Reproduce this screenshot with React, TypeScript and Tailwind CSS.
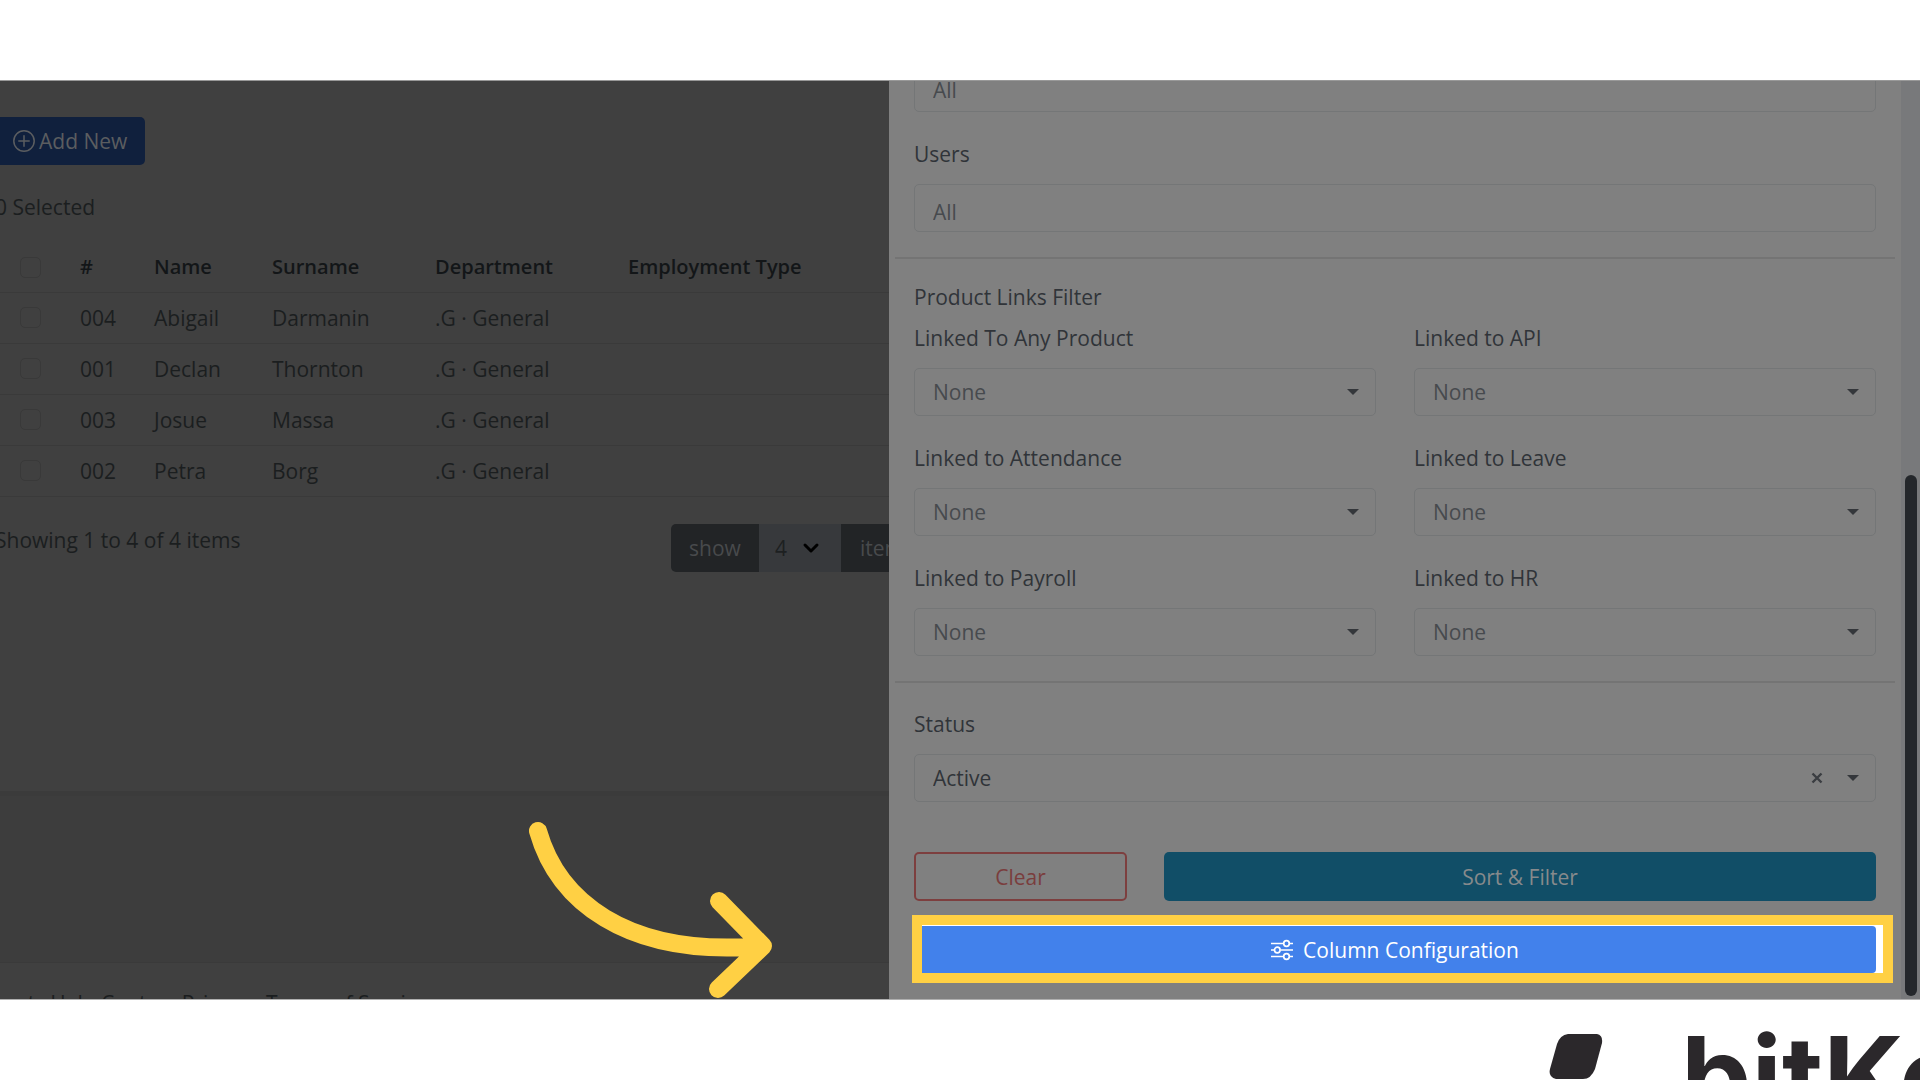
import { useState } from 'react'
import { ChevronDown } from 'lucide-react'

const EMPLOYEES = [
  { code: '004', name: 'Abigail', surname: 'Darmanin', department: '.G · General' },
  { code: '001', name: 'Declan', surname: 'Thornton', department: '.G · General' },
  { code: '003', name: 'Josue', surname: 'Massa', department: '.G · General' },
  { code: '002', name: 'Petra', surname: 'Borg', department: '.G · General' },
]

const PRODUCT_LINKS = [
  { id: 'any', label: 'Linked To Any Product' },
  { id: 'api', label: 'Linked to API' },
  { id: 'attendance', label: 'Linked to Attendance' },
  { id: 'leave', label: 'Linked to Leave' },
  { id: 'payroll', label: 'Linked to Payroll' },
  { id: 'hr', label: 'Linked to HR' },
]

const checkboxClass = 'block size-[21px] appearance-none rounded-[5px] border border-[#393939]'
const fieldClass = 'h-12 w-full appearance-none rounded-[5px] border border-[#747677] bg-transparent px-[18px] outline-none'
const labelClass = 'block text-[#303439]'

function Caret() {
  return (
    <svg className="pointer-events-none absolute top-[21px] right-[17px] h-[6px] w-3" viewBox="0 0 12 6" aria-hidden="true">
      <path d="M0 0h12L6 6z" fill="#34373b" />
    </svg>
  )
}

function LinkSelect({ id, label }: { id: string; label: string }) {
  return (
    <div>
      <label htmlFor={id} className={labelClass}>{label}</label>
      <div className="relative mt-4">
        <select id={id} className={`${fieldClass} text-[#474a4e]`}>
          <option>None</option>
        </select>
        <Caret />
      </div>
    </div>
  )
}

function EmployeeList() {
  return (
    <main className="flex min-w-0 flex-col overflow-hidden bg-[#404040] text-[#1b1e1f]">
      <div className="h-[710px] shrink-0">
        <button className="mt-9 -ml-2 flex h-12 w-[153px] items-center rounded-[5px] bg-[#10203d] pl-[21px] text-[#5b5d60]">
          <svg className="mr-1 size-[22px]" viewBox="0 0 22 22" fill="none" stroke="currentColor" strokeWidth="1.5" aria-hidden="true">
            <circle cx="11" cy="11" r="10.2" />
            <path d="M11 5.8v10.4M5.8 11h10.4" strokeLinecap="round" />
          </svg>
          Add New
        </button>
        <p className="mt-7 -ml-[5px] leading-7">0 Selected</p>

        <table className="mt-[22px] w-full min-w-[900px] table-fixed border-collapse text-left">
          <colgroup>
            <col className="w-[80px]" />
            <col className="w-[74px]" />
            <col className="w-[118px]" />
            <col className="w-[163px]" />
            <col className="w-[193px]" />
            <col />
          </colgroup>
          <thead>
            <tr className="h-[49px] border-b border-[#3a3a3a] text-[20px] text-[#131618]">
              <th className="pl-5">
                <input type="checkbox" aria-label="Select all" className={checkboxClass} />
              </th>
              <th className="font-semibold">#</th>
              <th className="font-semibold">Name</th>
              <th className="font-semibold">Surname</th>
              <th className="font-semibold">Department</th>
              <th className="font-semibold">Employment Type</th>
            </tr>
          </thead>
          <tbody>
            {EMPLOYEES.map((employee) => (
              <tr key={employee.code} className="h-[51px] border-b border-[#3a3a3a]">
                <td className="pl-5">
                  <input type="checkbox" aria-label={`Select ${employee.name}`} className={checkboxClass} />
                </td>
                <td>{employee.code}</td>
                <td>{employee.name}</td>
                <td>{employee.surname}</td>
                <td>{employee.department}</td>
                <td />
              </tr>
            ))}
          </tbody>
        </table>

        <div className="mt-[27px] -ml-[5px] flex items-start whitespace-nowrap">
          <p className="w-[676px] shrink-0 pt-0.5 leading-7">Showing 1 to 4 of 4 items</p>
          <div className="flex h-12 shrink-0 overflow-hidden rounded-[5px] text-[#484a4c]">
            <label htmlFor="page-size" className="flex w-[88px] items-center justify-center bg-[#222426]">show</label>
            <div className="relative w-[82px] bg-[#37393c]">
              <select id="page-size" className="h-full w-full appearance-none px-4 text-[#1d2021] outline-none">
                <option>4</option>
              </select>
              <ChevronDown className="pointer-events-none absolute top-3 right-[18px] size-6 text-black" strokeWidth={3} />
            </div>
            <span className="flex items-center bg-[#222426] px-[19px]">items</span>
          </div>
        </div>
      </div>

      <div className="h-[172px] shrink-0 border-t-[5px] border-b border-t-[#3b3b3b] border-b-[#3a3a3a] bg-[#3d3d3d]" />

      <footer className="-ml-6 flex gap-[15px] pt-[26px] leading-7 whitespace-nowrap">
        <a href="#about">About</a>
        <a href="#help">Help Center</a>
        <a href="#privacy">Privacy</a>
        <a href="#terms">Terms of Service</a>
      </footer>
    </main>
  )
}

function FilterPanel() {
  const [status, setStatus] = useState('Active')

  return (
    <aside className="flex min-w-0 overflow-hidden bg-[#808080]">
      <div className="min-w-0 flex-1 px-[25px]">
        <div className="-mt-[17px]">
          <input aria-label="Groups" placeholder="All" className={`${fieldClass} pt-1 placeholder:text-[#474a4e]`} />
        </div>
        <div className="mt-7">
          <label htmlFor="users" className={labelClass}>Users</label>
          <input id="users" placeholder="All" className={`${fieldClass} mt-4 pt-2 placeholder:text-[#474a4e]`} />
        </div>

        <hr className="-mx-[19px] mt-[25px] border-t-2 border-[#747474]" />

        <h2 className="mt-6 text-[#303439]">Product Links Filter</h2>
        <div className="mt-[13px] grid grid-cols-2 gap-x-[38px] gap-y-7">
          {PRODUCT_LINKS.map((link) => (
            <LinkSelect key={link.id} {...link} />
          ))}
        </div>

        <hr className="-mx-[19px] mt-[25px] border-t-2 border-[#747474]" />

        <label htmlFor="status" className={`${labelClass} mt-[27px]`}>Status</label>
        <div className="relative mt-4">
          <select
            id="status"
            value={status}
            onChange={(e) => setStatus(e.target.value)}
            className={`${fieldClass} text-[#303439]`}
          >
            <option value="">None</option>
            <option>Active</option>
          </select>
          <button
            aria-label="Clear status"
            onClick={() => setStatus('')}
            className="absolute top-[18px] right-[53px] text-[#3a3d41]"
          >
            <svg className="size-3" viewBox="0 0 12 12" stroke="currentColor" strokeWidth="2.4" aria-hidden="true">
              <path d="M1.5 1.5l9 9M10.5 1.5l-9 9" />
            </svg>
          </button>
          <Caret />
        </div>

        <div className="mt-[50px] flex gap-[37px]">
          <button className="h-[49px] w-[213px] rounded-[5px] border-2 border-[#7d3f3f] text-[#7a3d3d]">Clear</button>
          <button className="h-[49px] flex-1 rounded-[5px] bg-[#114e67] text-[#868a8c]">Sort &amp; Filter</button>
        </div>

        <div className="-mr-[17px] -ml-0.5 mt-3.5 border-10 border-[#ffd044] bg-white pt-px pr-[7px]">
          <button className="flex h-[47px] w-full items-center justify-center rounded-r-[4px] bg-[#4281eb] pr-2 text-white">
            <svg className="mr-2.5 size-[22px]" viewBox="0 0 22 22" fill="none" stroke="currentColor" strokeWidth="1.7" aria-hidden="true">
              <path d="M0 4.5h12.5M18.5 4.5H22M0 11h3M9.5 11H22M0 17.5h12.5M18.5 17.5H22" />
              <circle cx="15.5" cy="4.5" r="2.8" />
              <circle cx="6.3" cy="11" r="2.8" />
              <circle cx="15.5" cy="17.5" r="2.8" />
            </svg>
            Column Configuration
          </button>
        </div>
      </div>

      <div className="flex w-[19px] justify-center bg-[#78797b] pt-[394px] pb-[3px]">
        <div className="w-3 rounded-full bg-[#24272b]" />
      </div>
    </aside>
  )
}

function Brand() {
  return (
    <div className="flex h-20 items-start justify-end overflow-hidden text-[#2b282b]">
      <svg className="mt-[34px] mr-[78px] h-[46px] w-[54px] shrink-0" viewBox="0 0 54 46" aria-hidden="true">
        <path d="M19 0H48Q54 1 53 9L46 35Q42 45 34 45H7Q-1 43 1 35L8 10Q11 1 19 0Z" fill="currentColor" />
      </svg>
      <span className="mt-[21px] w-[239px] shrink-0 font-[Inter,sans-serif] text-[112px] leading-[110px] font-bold whitespace-nowrap">bitKo</span>
    </div>
  )
}

export default function App() {
  return (
    <div className="h-screen overflow-hidden bg-white font-['Open_Sans',sans-serif] text-[21px] leading-7">
      <div className="relative mt-20">
        <div className="grid h-[920px] grid-cols-[889fr_1031fr] border-y border-t-[#999999] border-b-[#b0b0b0]">
          <EmployeeList />
          <FilterPanel />
        </div>
        {/* Pointer from the list to the column configuration button */}
        <svg className="absolute top-[740px] left-[27.5%] h-[180px] w-[250px]" viewBox="0 0 250 180" fill="none" stroke="#ffd044" strokeWidth="18" strokeLinecap="round" strokeLinejoin="round" aria-hidden="true">
          <path d="M10 11C29 78 95 138 234 126M191 81L235 126L190 169" />
        </svg>
      </div>
      <Brand />
    </div>
  )
}
